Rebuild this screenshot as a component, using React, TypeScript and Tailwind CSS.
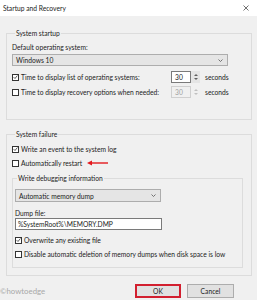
import React from "react";

const Check = ({ checked, disabled }: { checked?: boolean; disabled?: boolean }) => (
  <span
    className={`inline-flex items-center justify-center w-[7px] h-[7px] border ${
      disabled ? "border-[#bcbcbc]" : "border-[#333]"
    } bg-white shrink-0`}
  >
    {checked && (
      <svg width="6" height="6" viewBox="0 0 6 6">
        <path d="M0.8 3.2 L2.4 4.8 L5.3 1.2" fill="none" stroke="#222" strokeWidth="0.9" />
      </svg>
    )}
  </span>
);

const Chevron = () => (
  <svg width="5" height="3" viewBox="0 0 5 3">
    <path d="M0.5 0.5 L2.5 2.5 L4.5 0.5" fill="none" stroke="#555" strokeWidth="0.8" />
  </svg>
);

const Spin = ({ disabled }: { disabled?: boolean }) => (
  <div className="flex h-[12px] w-[29px]">
    <div
      className={`flex-1 flex items-center pl-[3px] border ${
        disabled ? "border-[#cfcfcf] bg-[#f0f0f0] text-[#a0a0a0]" : "border-[#7a7a7a] bg-white"
      }`}
    >
      30
    </div>
    <div
      className={`w-[9px] flex flex-col items-center justify-center gap-[2px] ${
        disabled ? "bg-[#f0f0f0]" : "bg-[#e4e4e4]"
      }`}
    >
      <svg width="4" height="2" viewBox="0 0 4 2">
        <path d="M0 2 L2 0 L4 2 Z" fill={disabled ? "#c0c0c0" : "#606060"} />
      </svg>
      <svg width="4" height="2" viewBox="0 0 4 2">
        <path d="M0 0 L2 2 L4 0 Z" fill={disabled ? "#c0c0c0" : "#606060"} />
      </svg>
    </div>
  </div>
);

export default function App() {
  return (
    <div
      className="w-[257px] h-[300px] bg-[#f0f0f0] overflow-hidden text-[6.7px] leading-[10px] text-[#222] whitespace-nowrap"
      style={{ fontFamily: 'Lato, "Noto Sans", sans-serif' }}
    >
      <div className="h-[16px] bg-white flex items-center justify-between pl-[3px] pr-[8px]">
        <span>Startup and Recovery</span>
        <svg width="6" height="6" viewBox="0 0 6 6">
          <path d="M0.5 0.5 L5.5 5.5 M5.5 0.5 L0.5 5.5" stroke="#333" strokeWidth="0.7" />
        </svg>
      </div>

      <div className="px-[6px] pt-[12px]">
        <fieldset className="border border-[#dcdcdc] pl-[5px] pr-[8px] pb-[21px] w-[246px]">
          <legend className="ml-[3px] px-[1px]">System startup</legend>
          <div className="mt-[4px]">Default operating system:</div>
          <div className="mt-[2px] h-[12px] w-[216px] bg-[#e5e5e5] border border-[#adadad] flex items-center justify-between pl-[3px] pr-[4px]">
            <span>Windows 10</span>
            <Chevron />
          </div>
          <div className="mt-[5px] flex items-center h-[12px]">
            <Check checked />
            <span className="ml-[2px] w-[150px]">Time to display list of operating systems:</span>
            <Spin />
            <span className="ml-[5px]">seconds</span>
          </div>
          <div className="mt-[3px] flex items-center h-[12px]">
            <Check />
            <span className="ml-[2px] w-[150px]">Time to display recovery options when needed:</span>
            <Spin disabled />
            <span className="ml-[5px]">seconds</span>
          </div>
        </fieldset>

        <fieldset className="mt-[9px] border border-[#dcdcdc] pl-[5px] pr-[8px] pb-[7px] w-[246px]">
          <legend className="ml-[3px] px-[1px]">System failure</legend>
          <div className="mt-[5px] flex items-center">
            <Check checked />
            <span className="ml-[2px]">Write an event to the system log</span>
          </div>
          <div className="mt-[4px] flex items-center">
            <Check />
            <span className="ml-[2px]">Automatically restart</span>
            <svg className="ml-[5px]" width="21" height="6" viewBox="0 0 21 6">
              <path d="M4 3 L21 3" stroke="#e3191e" strokeWidth="1.4" />
              <path d="M0 3 L5 0.5 L5 5.5 Z" fill="#e3191e" />
            </svg>
          </div>
          <fieldset className="mt-[5px] border border-[#dcdcdc] pl-[2px] pb-[8px]">
            <legend className="ml-[2px] px-[1px]">Write debugging information</legend>
            <div className="mt-[6px] h-[13px] w-[146px] bg-[#e5e5e5] border border-[#adadad] flex items-center justify-between pl-[3px] pr-[4px]">
              <span>Automatic memory dump</span>
              <Chevron />
            </div>
            <div className="mt-[6px]">Dump file:</div>
            <div className="h-[12px] w-[147px] bg-white border border-[#7a7a7a] flex items-center pl-[2px]">
              %SystemRoot%\MEMORY.DMP
            </div>
            <div className="mt-[5px] flex items-center">
              <Check checked />
              <span className="ml-[2px]">Overwrite any existing file</span>
            </div>
            <div className="mt-[4px] flex items-center">
              <Check />
              <span className="ml-[2px]">Disable automatic deletion of memory dumps when disk space is low</span>
            </div>
          </fieldset>
        </fieldset>
      </div>

      <div className="mt-[8px] flex items-center">
        <span className="w-[135px] text-[#a8a8a8] text-[7.8px]">©howtoedge</span>
        <button className="w-[46px] h-[14px] bg-[#e1e1e1] border-[2px] border-[#d21f2f] flex items-center justify-center">
          OK
        </button>
        <button className="ml-[6px] w-[47px] h-[14px] bg-[#e1e1e1] border border-[#adadad] flex items-center justify-center">
          Cancel
        </button>
      </div>
    </div>
  );
}
